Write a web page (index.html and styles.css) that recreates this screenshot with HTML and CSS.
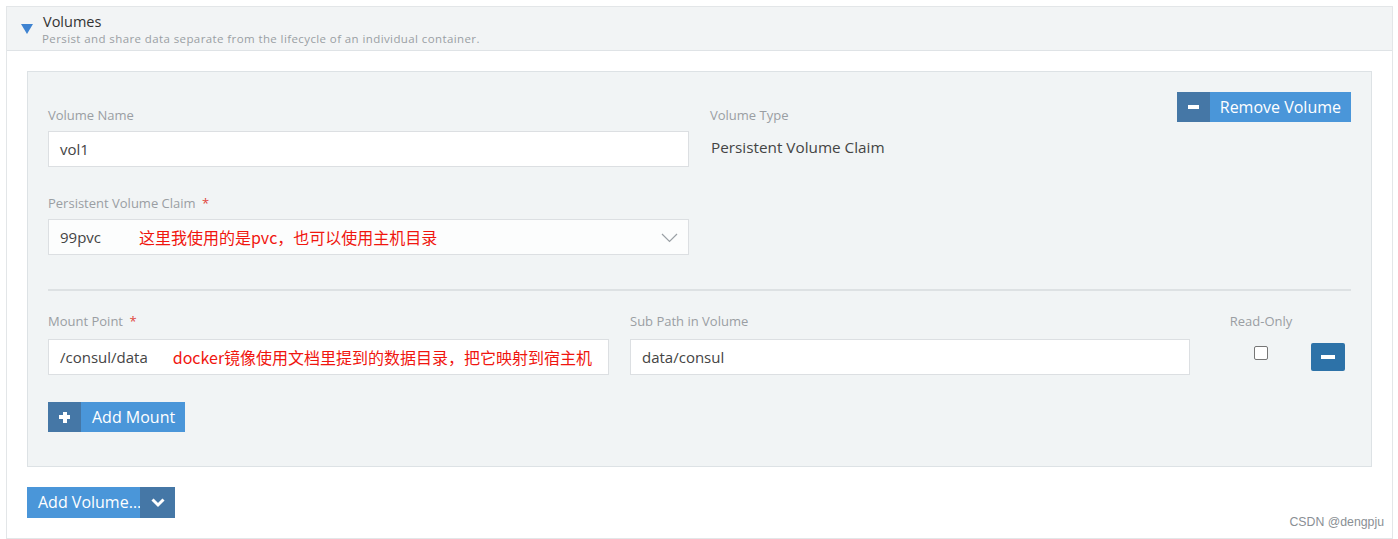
FILE: index.html
```html
<!DOCTYPE html>
<html>
<head>
<meta charset="utf-8">
<link rel="stylesheet" href="styles.css">
</head>
<body>
<div class="panel">
  <div class="panel-head">
    <span class="caret"></span>
    <div class="head-text">
      <div class="title">Volumes</div>
      <div class="subtitle">Persist and share data separate from the lifecycle of an individual container.</div>
    </div>
  </div>
  <div class="panel-body">
    <div class="volume-box">
      <div class="row2">
        <div class="field top">
          <label class="lbl">Volume Name</label>
          <div class="input">vol1</div>
        </div>
        <div class="type-col">
          <div class="field top">
            <label class="lbl">Volume Type</label>
            <div class="static">Persistent Volume Claim</div>
          </div>
          <button class="btn btn-icon-left"><span class="ico"><span class="minus"></span></span><span class="txt">Remove Volume</span></button>
        </div>
      </div>
      <div class="row2 second">
        <div class="field">
          <label class="lbl">Persistent Volume Claim <span class="req">*</span></label>
          <div class="input select"><span>99pvc</span><span class="note note1">这里我使用的是pvc，也可以使用主机目录</span>
            <svg class="chev" width="17" height="10" viewBox="0 0 17 10"><path d="M1 1 L8.5 8.5 L16 1" fill="none" stroke="#9aa0a5" stroke-width="1.2"/></svg>
          </div>
        </div>
        <div></div>
      </div>
      <div class="sep"></div>
      <div class="mount-row">
        <div class="field">
          <label class="lbl">Mount Point <span class="req">*</span></label>
          <div class="input"><span>/consul/data</span><span class="note note2">docker镜像使用文档里提到的数据目录，把它映射到宿主机</span></div>
        </div>
        <div class="field">
          <label class="lbl">Sub Path in Volume</label>
          <div class="input">data/consul</div>
        </div>
        <div class="ro-col">
          <div class="ro">
            <label class="lbl">Read-Only</label>
            <span class="checkbox"></span>
          </div>
          <button class="btn-del"><span class="minus"></span></button>
        </div>
      </div>
      <button class="btn btn-icon-left add-mount"><span class="ico"><span class="plus"></span></span><span class="txt">Add Mount</span></button>
    </div>
    <div class="add-vol">
      <span class="txt">Add Volume…</span>
      <span class="drop"><svg width="16" height="11" viewBox="0 0 16 11"><path d="M2.5 2.5 L8 8 L13.5 2.5" fill="none" stroke="#fff" stroke-width="3"/></svg></span>
    </div>
  </div>
  <div class="watermark">CSDN @dengpju</div>
</div>
</body>
</html>
```
FILE: styles.css
```css
* { box-sizing: border-box; }
body {
  margin: 0;
  background: #fff;
  font-family: "Open Sans", "Noto Sans CJK SC", sans-serif;
  color: #444;
}
.panel {
  position: relative;
  margin: 6px 0 0 6px;
  width: 1387px;
  height: 533px;
  border: 1px solid #e3e6e8;
  background: #fff;
}
.panel-head {
  height: 44px;
  background: #f2f4f5;
  border-bottom: 1px solid #dfe3e6;
  display: flex;
  align-items: flex-start;
  padding: 6px 0 0 14px;
}
.caret {
  width: 0; height: 0;
  border-left: 6px solid transparent;
  border-right: 6px solid transparent;
  border-top: 10px solid #3f83d1;
  margin: 11px 10px 0 0;
}
.title { font-size: 14.5px; line-height: 18px; color: #333; }
.subtitle { font-size: 11.5px; letter-spacing: 0.4px; line-height: 14px; color: #9a9fa4; margin-top: 1px; margin-left: -1px; }
.panel-body { padding: 20px 20px 20px 20px; }
.volume-box {
  background: #f1f4f5;
  border: 1px solid #dde2e5;
  padding: 20px 20px 34px 20px;
}
.row2 {
  display: grid;
  grid-template-columns: 641px 1fr;
  column-gap: 21px;
}
.row2.second { margin-top: 27px; }
.field { display: flex; flex-direction: column; }
.field.top { padding-top: 14px; }
.lbl {
  font-size: 13px;
  line-height: 18px;
  color: #9a9ea3;
  margin-bottom: 7px;
}
.req { color: #e0463c; margin-left: 3px; }
.input {
  height: 36px;
  background: #fff;
  border: 1px solid #dcdfe2;
  font-size: 15px;
  color: #444;
  padding: 0 11px 1px;
  display: flex;
  align-items: center;
  white-space: nowrap;
}
.select { position: relative; background: #fcfdfd; }
.chev { position: absolute; right: 10px; top: 13px; }
.note { color: #f0160f; font-family: "Noto Sans CJK SC", sans-serif; font-size: 16px; }
.note1 { margin-left: 38px; }
.note2 { margin-left: 25px; }
.static { font-size: 15.3px; line-height: 20px; color: #444; padding-top: 6px; padding-left: 1px; }
.type-col { display: flex; justify-content: space-between; align-items: flex-start; }
.btn {
  border: 0;
  padding: 0;
  height: 30px;
  display: flex;
  align-items: stretch;
  background: #4a96d9;
  color: #fff;
  font-family: inherit;
  font-size: 16px;
  cursor: pointer;
}
.btn .ico {
  width: 33px;
  background: #4577a6;
  display: flex;
  align-items: center;
  justify-content: center;
}
.btn .txt { display: flex; align-items: center; padding: 0 10px 0 10px; }
.minus { display: block; width: 11px; height: 4px; background: #fff; }
.plus { position: relative; display: block; width: 11px; height: 11px; }
.plus::before, .plus::after { content: ""; position: absolute; background: #fff; }
.plus::before { left: 0; top: 3.5px; width: 11px; height: 4px; }
.plus::after { left: 3.5px; top: 0; width: 4px; height: 11px; }
.sep { height: 2px; background: #dde1e3; margin: 34px 0 21px; }
.mount-row {
  display: grid;
  grid-template-columns: 561px 560px 1fr;
  column-gap: 21px;
}
.mount-row .lbl { margin-bottom: 9px; }
.ro-col { display: flex; align-items: flex-start; }
.ro { width: 100px; display: flex; flex-direction: column; align-items: center; }
.mount-row .ro .lbl { margin-bottom: 16px; }
.checkbox {
  width: 14px; height: 14px;
  border: 1px solid #767676;
  border-radius: 2px;
  background: #fff;
  margin-right: 1px;
}
.btn-del {
  margin-top: 31px;
  width: 34px; height: 28px;
  border: 0; border-radius: 2px;
  background: #2d72a8;
  display: flex; align-items: center; justify-content: center;
  padding: 0;
}
.btn-del .minus { width: 14px; height: 4px; }
.add-mount { margin-top: 27px; }
.add-mount .txt { padding: 0 10px 0 11px; }
.add-vol {
  margin-top: 20px;
  display: inline-flex;
  height: 31px;
  background: #4a96d9;
  color: #fff;
  font-size: 16px;
}
.add-vol .txt { display: flex; align-items: center; padding: 0 0 2px 11px; width: 113px; white-space: nowrap; }
.add-vol .drop { width: 35px; background: #4577a6; display: flex; align-items: center; justify-content: center; }
.watermark {
  position: absolute;
  right: 8px;
  bottom: 9px;
  font-family: "Liberation Sans", sans-serif;
  font-size: 12.3px;
  color: #8a8f94;
}
```
